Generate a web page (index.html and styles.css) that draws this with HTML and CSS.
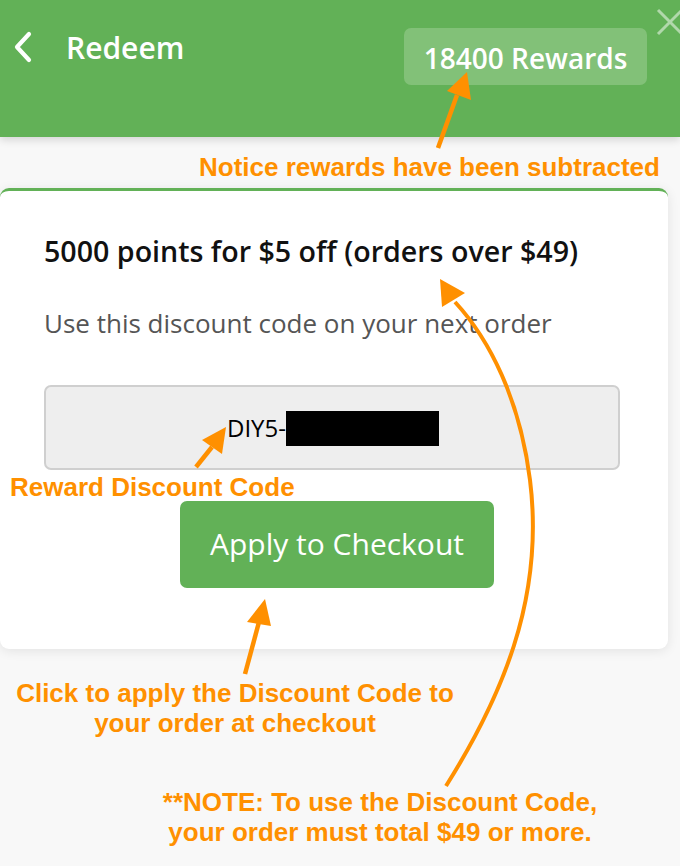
FILE: index.html
```html
<!DOCTYPE html>
<html lang="en">
<head>
<meta charset="utf-8">
<title>Redeem</title>
<link rel="stylesheet" href="styles.css">
</head>
<body>
<div class="app">
  <header class="topbar">
    <span class="back" aria-label="Back">
      <svg width="20" height="32" viewBox="0 0 20 32"><path d="M16 3 L4 16 L16 29" fill="none" stroke="#fff" stroke-width="4.2" stroke-linecap="round" stroke-linejoin="round"/></svg>
    </span>
    <h1 class="title">Redeem</h1>
    <div class="pill">18400 Rewards</div>
    <span class="close" aria-label="Close">
      <svg width="28" height="28" viewBox="0 0 28 28"><path d="M2 2 L26 26 M26 2 L2 26" fill="none" stroke="rgba(255,255,255,0.5)" stroke-width="3"/></svg>
    </span>
  </header>

  <main class="content">
    <section class="card">
      <h2 class="card-title">5000 points for $5 off (orders over $49)</h2>
      <p class="card-sub">Use this discount code on your next order</p>
      <div class="codebox">
        <span class="code">DIY5-</span><span class="redact"></span>
      </div>
      <div class="actions">
        <button class="apply">Apply to Checkout</button>
      </div>
    </section>
  </main>

  <div class="annotations">
    <svg class="arrows" width="680" height="866" viewBox="0 0 680 866">
      <g fill="none" stroke="#ff9000" stroke-width="4.5" stroke-linecap="butt">
        <path d="M438 148 L457 95"/>
        <path d="M196 467 L212 447"/>
        <path d="M245 674 L259 622"/>
        <path d="M446 786 C500 700 545 600 530 480 C520 400 490 340 455 302" stroke-width="4"/>
      </g>
      <g fill="#ff9000">
        <polygon points="467,72 447,91 471,100"/>
        <polygon points="226,427 202,440 222,454"/>
        <polygon points="265,599 247,622 271,626"/>
        <polygon points="440,279 442,307 465,293"/>
      </g>
    </svg>
    <div class="note note-rewards">Notice rewards have been subtracted</div>
    <div class="note note-code">Reward Discount Code</div>
    <div class="note note-apply">Click to apply the Discount Code to<br>your order at checkout</div>
    <div class="note note-min">**NOTE: To use the Discount Code,<br>your order must total $49 or more.</div>
  </div>
</div>
</body>
</html>
```

FILE: styles.css
```css
* { box-sizing: border-box; }

html, body {
  margin: 0;
  padding: 0;
}

body {
  background: #f8f8f8;
  font-family: "Open Sans", "Noto Sans", sans-serif;
  width: 680px;
  height: 866px;
  overflow: hidden;
}

.app {
  position: relative;
  width: 680px;
  height: 866px;
}

/* Header */
.topbar {
  position: relative;
  height: 137px;
  background: #62b157;
  display: flex;
  align-items: flex-start;
  box-shadow: 0 3px 8px rgba(0, 0, 0, 0.14);
  z-index: 1;
}

.back {
  display: block;
  margin: 31px 0 0 13px;
  width: 20px;
  height: 32px;
}

.back svg { display: block; }

.title {
  margin: 30px 0 0 33px;
  font-size: 30px;
  line-height: 36px;
  font-weight: 600;
  color: #fff;
}

.pill {
  margin: 28px 33px 0 auto;
  height: 57px;
  width: 243px;
  background: #82c178;
  border-radius: 7px;
  color: #fff;
  font-size: 28px;
  font-weight: 600;
  display: flex;
  align-items: center;
  justify-content: center;
  padding-top: 2px;
}

.close {
  position: absolute;
  top: 8px;
  left: 656px;
  width: 28px;
  height: 28px;
}

.close svg { display: block; }

/* Content */
.content {
  padding-top: 51px;
}

.card {
  width: 668px;
  background: #fff;
  border-top: 3px solid #62b157;
  border-radius: 9px;
  box-shadow: 0 2px 12px rgba(0, 0, 0, 0.09);
  padding: 43px 48px 61px 44px;
}

.card-title {
  margin: 0;
  font-size: 28.6px;
  line-height: 34px;
  font-weight: 600;
  color: #111;
}

.card-sub {
  margin: 39px 0 0 0;
  font-size: 26px;
  line-height: 32px;
  font-weight: 400;
  color: #555;
}

.codebox {
  margin-top: 46px;
  height: 85px;
  background: #eeeeee;
  border: 2px solid #cfcfcf;
  border-radius: 7px;
  display: flex;
  align-items: center;
  justify-content: center;
  padding-left: 2px;
}

.code {
  font-size: 24px;
  color: #000;
  line-height: 30px;
}

.redact {
  display: block;
  width: 153px;
  height: 35px;
  background: #000;
  margin-top: 2px;
}

.actions {
  margin-top: 31px;
  display: flex;
  justify-content: center;
  padding-left: 10px;
}

.apply {
  width: 314px;
  height: 87px;
  border: none;
  border-radius: 7px;
  background: #62b157;
  color: #fff;
  font-family: "Open Sans", "Noto Sans", sans-serif;
  font-size: 30px;
  font-weight: 400;
  padding: 0 0 2px 0;
}

/* Annotation overlay */
.annotations {
  position: absolute;
  inset: 0;
  z-index: 2;
  pointer-events: none;
}

.arrows {
  position: absolute;
  top: 0;
  left: 0;
}

.note {
  position: absolute;
  font-family: "Liberation Sans", Arial, sans-serif;
  font-weight: 700;
  font-size: 26px;
  line-height: 30px;
  color: #ff9000;
  white-space: nowrap;
}

.note-rewards { top: 152px; left: 199px; }
.note-code { top: 472px; left: 10px; }
.note-apply { top: 678px; left: 0; width: 470px; text-align: center; }
.note-min { top: 787px; left: 130px; width: 500px; text-align: center; }
```
